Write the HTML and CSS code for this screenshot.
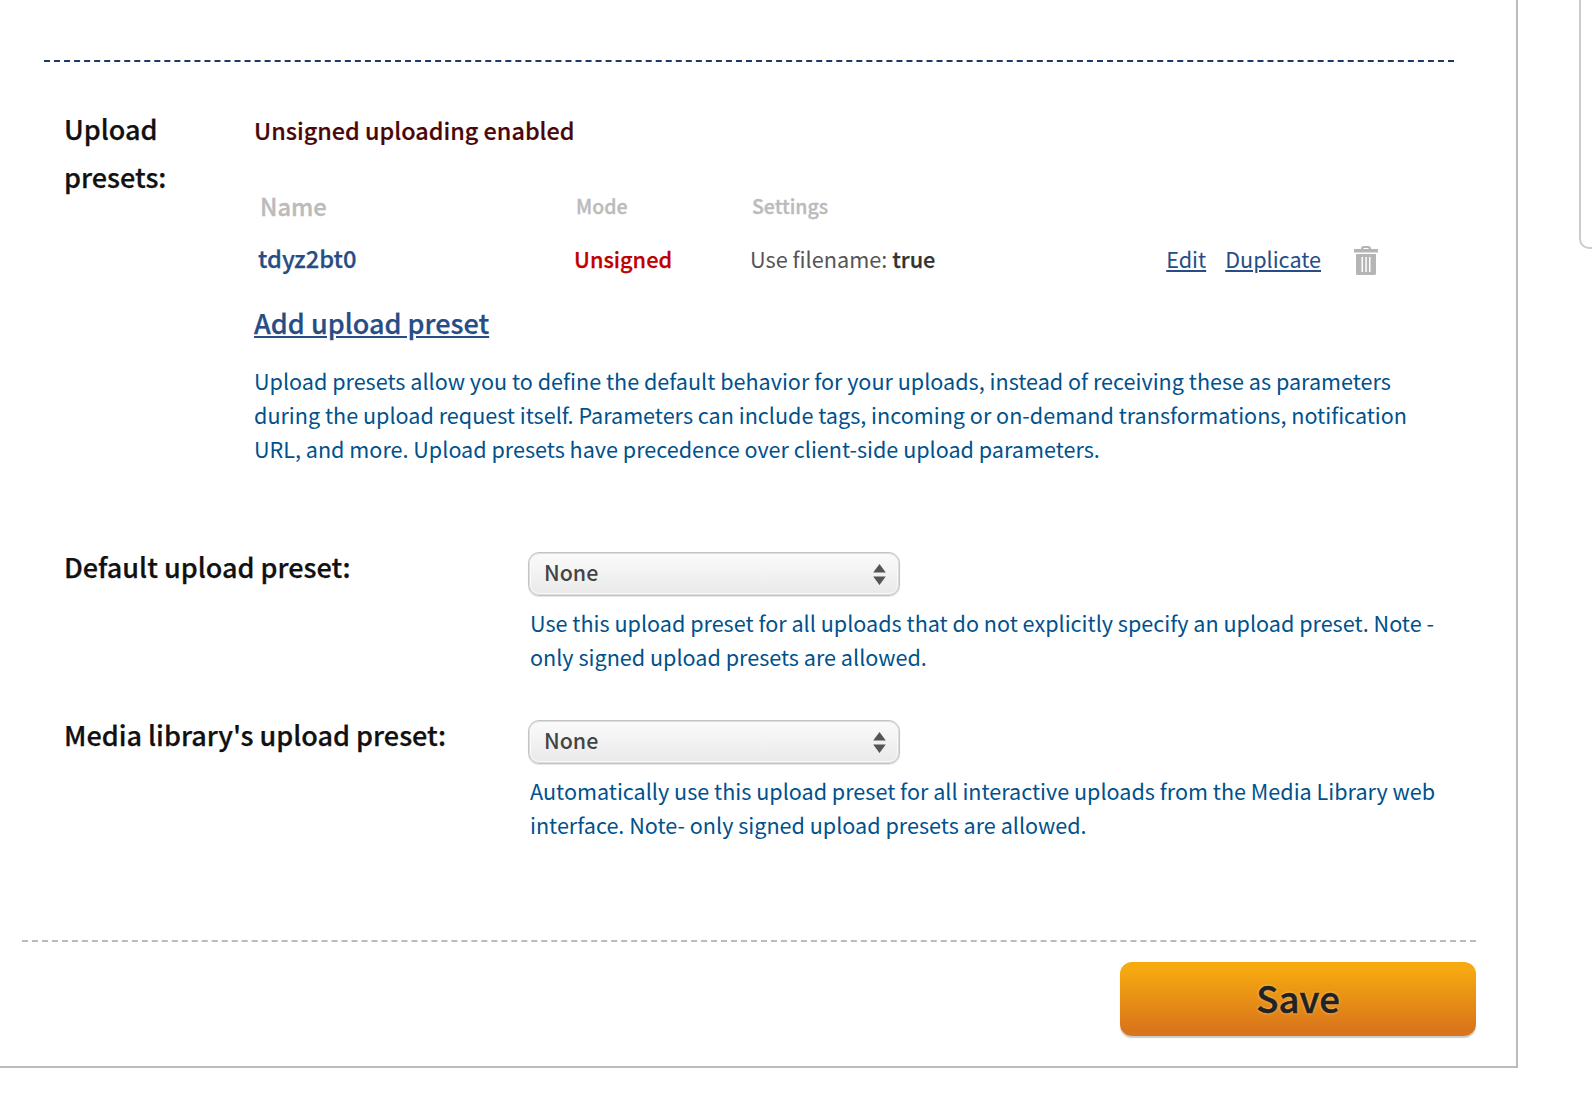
FILE: index.html
```html
<!DOCTYPE html>
<html lang="en">
<head>
<meta charset="utf-8">
<title>Upload settings</title>
<link rel="stylesheet" href="styles.css">
</head>
<body>
<div class="page">
  <main class="panel">
    <section class="presets">
      <h2 class="label label-narrow">Upload presets:</h2>
      <div class="presets-body">
        <p class="enabled">Unsigned uploading enabled</p>
        <div class="preset-table">
          <div class="row head">
            <span class="col-name head-name">Name</span>
            <span class="col-mode">Mode</span>
            <span class="col-settings">Settings</span>
          </div>
          <div class="row item">
            <a class="col-name preset-name">tdyz2bt0</a>
            <span class="col-mode unsigned">Unsigned</span>
            <span class="col-settings setting">Use filename: <b>true</b></span>
            <span class="actions">
              <a href="#" class="action">Edit</a>
              <a href="#" class="action">Duplicate</a>
              <svg class="trash" viewBox="0 0 24 29" aria-hidden="true">
                <path fill="#b5b5b5" fill-rule="evenodd" d="M7 2.500C7 1 8 0 9.500 0h5C16 0 17 1 17 2.500V3h7v3.500H0V3h7zM9.500 2v1h5V2zM2 8h20v19.500a1.500 1.500 0 0 1-1.500 1.500h-17A1.500 1.500 0 0 1 2 27.500zM7.500 11v15h1.500V11zm3.800 0v15h1.500V11zM15 11v15h1.500V11z"/>
              </svg>
            </span>
          </div>
        </div>
        <a href="#" class="add-preset">Add upload preset</a>
        <p class="note">Upload presets allow you to define the default behavior for your uploads, instead of receiving these as parameters during the upload request itself. Parameters can include tags, incoming or on-demand transformations, notification URL, and more. Upload presets have precedence over client-side upload parameters.</p>
      </div>
    </section>

    <section class="setting-row first">
      <h2 class="label label-wide">Default upload preset:</h2>
      <div class="field">
        <div class="select"><span>None</span>
          <svg class="arrows" viewBox="0 0 12 20" aria-hidden="true"><path fill="#555" d="M6 0l6 8H0zM0 12h12l-6 8z"/></svg>
        </div>
        <p class="note">Use this upload preset for all uploads that do not explicitly specify an upload preset. Note - only signed upload presets are allowed.</p>
      </div>
    </section>

    <section class="setting-row second">
      <h2 class="label label-wide">Media library's upload preset:</h2>
      <div class="field">
        <div class="select"><span>None</span>
          <svg class="arrows" viewBox="0 0 12 20" aria-hidden="true"><path fill="#555" d="M6 0l6 8H0zM0 12h12l-6 8z"/></svg>
        </div>
        <p class="note">Automatically use this upload preset for all interactive uploads from the Media Library web interface. Note- only signed upload presets are allowed.</p>
      </div>
    </section>

    <footer class="save-bar">
      <button class="save" type="button">Save</button>
    </footer>
  </main>
  <aside class="side-card"></aside>
</div>
</body>
</html>
```
FILE: styles.css
```css
* { box-sizing: border-box; }
html, body { margin: 0; padding: 0; background: #fff; }
body {
  font-family: "Noto Sans CJK SC", "Source Sans Pro", "Noto Sans", sans-serif;
  color: #111;
  overflow: hidden;
}
.page { display: flex; align-items: flex-start; height: 1096px; }
.panel {
  width: 1518px;
  height: 1068px;
  flex: none;
  border-right: 2px solid #bbb;
  border-bottom: 2px solid #bbb;
  padding: 60px 40px 0 22px;
}
.side-card {
  width: 40px;
  height: 249px;
  margin-left: 61px;
  flex: none;
  border-left: 2px solid #ccc;
  border-bottom: 2px solid #ccc;
  border-bottom-left-radius: 10px;
}
.presets {
  margin-left: 22px;
  margin-right: 22px;
  border-top: 2px dashed #1c3a66;
  padding: 0 0 0 20px;
  display: flex;
}
.label {
  margin: 0;
  font-size: 27px;
  font-weight: 500;
  line-height: 48px;
  color: #111;
  flex: none;
  -webkit-text-stroke: .25px currentColor;
}
.label-narrow { width: 190px; margin-top: 43px; }
.label-wide { width: 464px; margin-left: 42px; line-height: 30px; }
.presets-body { flex: 1; margin-top: 44px; min-width: 0; }
.enabled {
  margin: 0;
  font-size: 23.400px;
  font-weight: 500;
  line-height: 48px;
  color: #4a0606;
  -webkit-text-stroke: .2px currentColor;
}
.preset-table { margin-top: 36px; }
.row { display: flex; align-items: center; position: relative; }
.head {
  height: 30px;
  color: #bbb;
  font-weight: 500;
  font-size: 19.500px;
  -webkit-text-stroke: .35px currentColor;
}
.item { margin-top: 21px; height: 34px; font-size: 21.700px; }
.col-name { width: 320px; flex: none; }
.col-mode { width: 176px; flex: none; }
.col-settings { flex: none; }
.head .col-name { padding-left: 6px; font-size: 23.700px; position: relative; top: 1px; }
.head .col-mode { padding-left: 2px; }
.head .col-settings { padding-left: 2px; }
.item .col-name { padding-left: 4px; font-size: 23.700px; }
.preset-name { color: #264d85; font-weight: 500; -webkit-text-stroke: .25px currentColor; }
.unsigned { color: #c00000; font-weight: 500; -webkit-text-stroke: .25px currentColor; }
.setting { color: #555; }
.setting b { color: #333; font-weight: 500; -webkit-text-stroke: .25px currentColor; }
.actions {
  display: flex;
  align-items: center;
  margin-left: auto;
  margin-right: 76px;
  gap: 19px;
}
.action { color: #264d85; text-decoration: underline; font-size: 21.600px; }
.trash { width: 24px; height: 29px; margin-left: 14px; margin-top: 4px; }
.add-preset {
  display: block;
  width: max-content;
  margin-top: 28px;
  color: #264d85;
  font-size: 27px;
  font-weight: 500;
  line-height: 40px;
  text-decoration: underline;
  -webkit-text-stroke: .25px currentColor;
}
.note {
  margin: 21px 0 0;
  font-size: 21.580px;
  line-height: 34px;
  color: #00518c;
}
.setting-row { display: flex; }
.setting-row.first { margin-top: 86px; }
.setting-row.second { margin-top: 46px; }
.field { width: 925px; flex: none; }
.field .note { margin-top: 10px; padding-left: 2px; }
.select {
  width: 372px;
  height: 44px;
  border: 1px solid #c4c4c4;
  margin: 0;
  border-radius: 11px;
  background: linear-gradient(#fbfbfb, #e9e9e9);
  box-shadow: inset 0 0 0 1px #dcdcdc, inset 0 0 0 2px #fafafa, 0 1px 1px rgba(0,0,0,.1);
  display: flex;
  align-items: center;
  justify-content: space-between;
  padding: 0 13px 0 15px;
  font-size: 21.400px;
  font-weight: 500;
  color: #444;
}
.select span { padding-bottom: 6px; }
.arrows { width: 13px; height: 21px; }
.save-bar {
  margin-top: 98px;
  border-top: 2px dashed #bbb;
  padding-top: 20px;
  display: flex;
  justify-content: flex-end;
}
.save {
  width: 356px;
  height: 74px;
  border: 0;
  border-radius: 12px;
  background: linear-gradient(#f6aa10 8%, #da751b 92%);
  box-shadow: 0 2px 1px #ccc;
  font-family: inherit;
  font-size: 36.600px;
  font-weight: 500;
  color: #222;
  -webkit-text-stroke: .5px currentColor;
  text-shadow: 0 0 3px #ffdc9a;
  padding: 0 0 4px;
}
```
